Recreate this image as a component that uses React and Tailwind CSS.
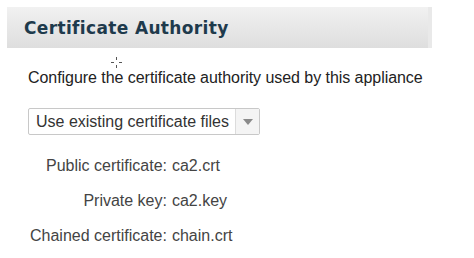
export default function App() {
  return (
    <div className="relative w-[474px] h-[258px] bg-white overflow-hidden" style={{ fontFamily: '"Liberation Sans", Arial, sans-serif' }}>
      <div className="pt-[7px] pl-[7px] w-[432px]">
        <div className="h-[41px] flex items-center pl-[17px] pt-[2px] bg-gradient-to-b from-[#f1f1f1] to-[#dedede] border-r-4 border-[#e9e9e9]">
          <span className="text-[17px] font-bold text-[#1e3a4c] tracking-[0.35px]" style={{ fontFamily: '"DejaVu Sans", sans-serif' }}>Certificate Authority</span>
        </div>
      </div>
      <div className="pl-[28px] pt-[20px] text-[#222] text-[16px]">
        <div className="leading-[20px] tracking-[-0.05px]">Configure the certificate authority used by this appliance</div>
        <div className="mt-[20px] w-[232px] h-[27px] border border-[#c8c8c8] rounded-[2px] flex items-center">
          <span className="flex-1 pl-[7px] text-[#333]">Use existing certificate files</span>
          <span className="w-[24px] h-full border-l border-[#dcdcdc] bg-[#f4f4f4] flex items-center justify-center">
            <svg width="10" height="6" viewBox="0 0 10 6"><path d="M0 0h10L5 6z" fill="#8a8a8a" /></svg>
          </span>
        </div>
        <div className="mt-[21px] ml-[2px] grid grid-cols-[auto_auto] justify-start gap-x-[5px] gap-y-[15px] text-[#444] leading-[20px]">
          <span className="text-right">Public certificate:</span><span>ca2.crt</span>
          <span className="text-right">Private key:</span><span>ca2.key</span>
          <span className="text-right">Chained certificate:</span><span>chain.crt</span>
        </div>
      </div>
      <div className="absolute left-[111px] top-[57px] w-[11px] h-[11px]">
        <div className="absolute left-[5px] top-0 w-[1px] h-[3px] bg-[#555]" />
        <div className="absolute left-[5px] top-[8px] w-[1px] h-[3px] bg-[#555]" />
        <div className="absolute left-0 top-[5px] w-[3px] h-[1px] bg-[#555]" />
        <div className="absolute left-[8px] top-[5px] w-[3px] h-[1px] bg-[#555]" />
      </div>
    </div>
  );
}
